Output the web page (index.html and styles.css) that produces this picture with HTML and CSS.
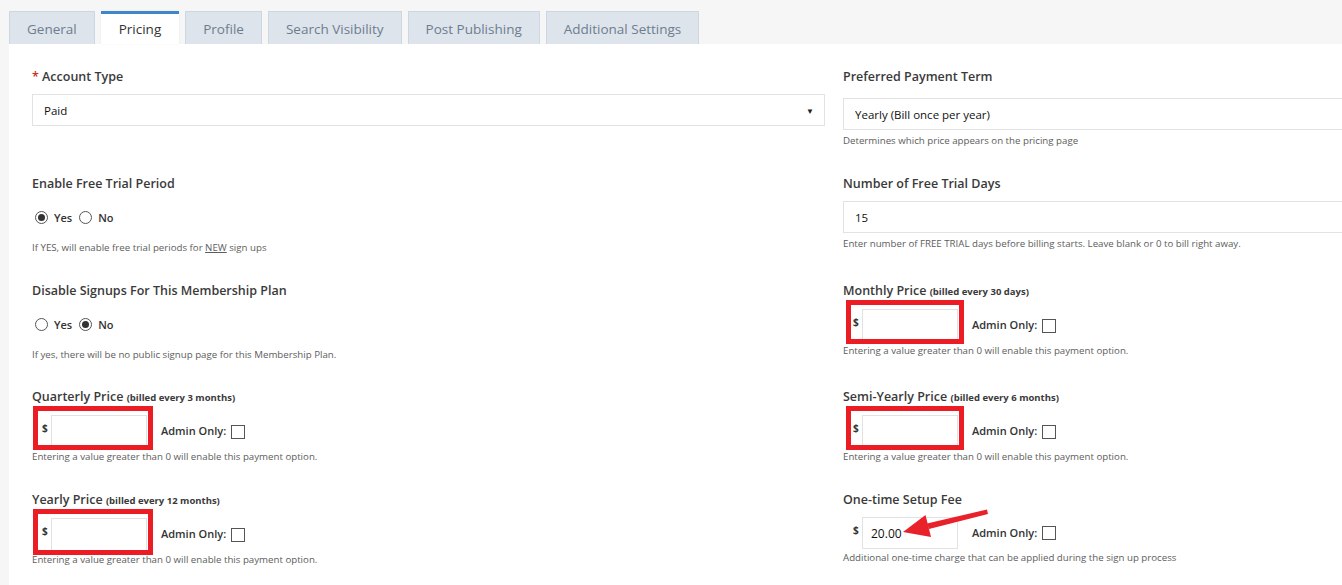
FILE: index.html
```html
<!DOCTYPE html>
<html lang="en">
<head>
<meta charset="utf-8">
<title>Membership Plan – Pricing</title>
<link rel="stylesheet" href="styles.css">
</head>
<body>
<div class="page">
  <nav class="tabs">
    <a class="tab">General</a>
    <a class="tab tab--active">Pricing</a>
    <a class="tab">Profile</a>
    <a class="tab">Search Visibility</a>
    <a class="tab">Post Publishing</a>
    <a class="tab">Additional Settings</a>
  </nav>

  <div class="panel">
    <div class="form-grid">

      <div class="field">
        <label class="field-label"><span class="req">*</span> Account Type</label>
        <div class="select"><span>Paid</span><span class="select-arrow">&#9660;</span></div>
      </div>

      <div class="field">
        <label class="field-label field-label--loose">Preferred Payment Term</label>
        <input class="text-input" type="text" value="Yearly (Bill once per year)">
        <p class="help">Determines which price appears on the pricing page</p>
      </div>

      <div class="field">
        <label class="field-label">Enable Free Trial Period</label>
        <div class="radios">
          <label class="radio"><input type="radio" name="trial" checked> Yes</label>
          <label class="radio"><input type="radio" name="trial"> No</label>
        </div>
        <p class="help help--radio">If YES, will enable free trial periods for <u>NEW</u> sign ups</p>
      </div>

      <div class="field">
        <label class="field-label">Number of Free Trial Days</label>
        <input class="text-input" type="text" value="15">
        <p class="help">Enter number of FREE TRIAL days before billing starts. Leave blank or 0 to bill right away.</p>
      </div>

      <div class="field">
        <label class="field-label">Disable Signups For This Membership Plan</label>
        <div class="radios">
          <label class="radio"><input type="radio" name="disable"> Yes</label>
          <label class="radio"><input type="radio" name="disable" checked> No</label>
        </div>
        <p class="help help--radio">If yes, there will be no public signup page for this Membership Plan.</p>
      </div>

      <div class="field">
        <label class="field-label">Monthly Price <small>(billed every 30 days)</small></label>
        <div class="price-row">
          <div class="money money--flagged"><span class="currency">$</span><input class="money-input" type="text" value=""></div>
          <label class="admin">Admin Only: <input type="checkbox"></label>
        </div>
        <p class="help help--price">Entering a value greater than 0 will enable this payment option.</p>
      </div>

      <div class="field">
        <label class="field-label">Quarterly Price <small>(billed every 3 months)</small></label>
        <div class="price-row">
          <div class="money money--flagged money--left"><span class="currency">$</span><input class="money-input" type="text" value=""></div>
          <label class="admin">Admin Only: <input type="checkbox"></label>
        </div>
        <p class="help help--price">Entering a value greater than 0 will enable this payment option.</p>
      </div>

      <div class="field">
        <label class="field-label">Semi-Yearly Price <small>(billed every 6 months)</small></label>
        <div class="price-row">
          <div class="money money--flagged"><span class="currency">$</span><input class="money-input" type="text" value=""></div>
          <label class="admin">Admin Only: <input type="checkbox"></label>
        </div>
        <p class="help help--price">Entering a value greater than 0 will enable this payment option.</p>
      </div>

      <div class="field">
        <label class="field-label">Yearly Price <small>(billed every 12 months)</small></label>
        <div class="price-row">
          <div class="money money--flagged money--left money--tall"><span class="currency">$</span><input class="money-input" type="text" value=""></div>
          <label class="admin">Admin Only: <input type="checkbox"></label>
        </div>
        <p class="help help--price">Entering a value greater than 0 will enable this payment option.</p>
      </div>

      <div class="field">
        <label class="field-label">One-time Setup Fee</label>
        <div class="price-row">
          <div class="money"><span class="currency">$</span><input class="money-input money-input--filled" type="text" value="20.00">
            <svg class="arrow" width="100" height="40" viewBox="0 0 100 40" aria-hidden="true">
              <path d="M29 18.5 L89 4.5 L90 9 L31 24 Z" fill="#e8212b"/>
              <polygon points="5,27 27.5,10 33,32" fill="#e8212b"/>
            </svg>
          </div>
          <label class="admin">Admin Only: <input type="checkbox"></label>
        </div>
        <p class="help help--price">Additional one-time charge that can be applied during the sign up process</p>
      </div>

    </div>
  </div>
</div>
</body>
</html>
```

FILE: styles.css
```css
html, body {
  margin: 0;
  padding: 0;
}

body {
  background: #f6f6f6;
  font-family: "Open Sans", "Liberation Sans", sans-serif;
  color: #333;
  overflow: hidden;
  width: 1342px;
  height: 585px;
}

.page {
  padding: 11px 0 0 9px;
}

/* Tabs */
.tabs {
  display: flex;
  gap: 6px;
  height: 33px;
}

.tab {
  box-sizing: border-box;
  height: 33px;
  padding: 1px 17px 0 17px;
  display: flex;
  align-items: center;
  background: #dde4ec;
  border: 1px solid #cdd7e2;
  border-bottom: none;
  color: #6d7d8e;
  font-size: 13.5px;
  cursor: pointer;
}

.tab--active {
  background: #fff;
  border: none;
  border-top: 3px solid #3d86c7;
  color: #333;
  padding: 0 18px;
  box-shadow: 0 0 2px rgba(0,0,0,0.06);
}

/* Panel */
.panel {
  background: #fff;
  width: 1650px;
  height: 560px;
  box-sizing: border-box;
  padding: 24px 23px 0 23px;
}

.form-grid {
  display: grid;
  grid-template-columns: 793px 793px;
  column-gap: 18px;
  grid-template-rows: 107px 107px 106px 103px auto;
}

.field {
  display: flex;
  flex-direction: column;
  align-items: flex-start;
}

.field-label {
  display: block;
  font-size: 12.5px;
  font-weight: 600;
  line-height: 18px;
  color: #3a3a3a;
  margin-bottom: 8px;
  white-space: nowrap;
}

.field-label--loose {
  margin-bottom: 12px;
}

.field-label small {
  font-size: 9.5px;
  font-weight: 700;
  color: #3a3a3a;
}

.req {
  color: #c9302c;
}

/* Select */
.select {
  box-sizing: border-box;
  width: 793px;
  height: 32px;
  border: 1px solid #e2e2e2;
  background: #fff;
  display: flex;
  align-items: center;
  justify-content: space-between;
  padding: 0 10px 0 11px;
  font-size: 11.5px;
  color: #111;
}

.select-arrow {
  font-size: 8px;
  color: #222;
}

/* Text inputs */
.text-input {
  box-sizing: border-box;
  width: 793px;
  height: 32px;
  border: 1px solid #e2e2e2;
  padding: 0 11px;
  font-family: inherit;
  font-size: 11.5px;
  color: #111;
  background: #fff;
  outline: none;
  margin: 0;
}

.help {
  margin: 4px 0 0 0;
  font-size: 9.7px;
  line-height: 14px;
  color: #5d5d5d;
  white-space: nowrap;
}

.help--radio {
  margin-top: 16px;
}

.help--price {
  margin-top: 2px;
}

/* Radios */
.radios {
  display: flex;
  gap: 4px;
  margin-top: 8px;
  height: 16px;
  align-items: center;
}

.radio {
  display: flex;
  align-items: center;
  gap: 6px;
  font-size: 11px;
  font-weight: 600;
  color: #333;
}

.radio input {
  appearance: none;
  -webkit-appearance: none;
  margin: 0 0 0 3px;
  width: 13px;
  height: 13px;
  border: 1px solid #555;
  border-radius: 50%;
  background: #fff;
  box-sizing: border-box;
  display: grid;
  place-items: center;
}

.radio input:checked::before {
  content: "";
  width: 7px;
  height: 7px;
  border-radius: 50%;
  background: #333;
}

/* Price rows */
.price-row {
  display: flex;
  align-items: center;
}

.money {
  position: relative;
  display: flex;
  align-items: flex-start;
  padding-left: 10px;
  gap: 3px;
  width: 105px;
}

.money--flagged::after {
  content: "";
  position: absolute;
  top: -9px;
  left: 3px;
  width: 118px;
  height: 44px;
  border: 5px solid #ec1c24;
  box-sizing: border-box;
  pointer-events: none;
}

.money--left::after {
  left: 1px;
  width: 120px;
}

.money--tall::after {
  height: 46px;
}

.currency {
  font-size: 10px;
  font-weight: 700;
  color: #333;
  width: 6px;
  margin-top: 6px;
}

.money-input {
  box-sizing: border-box;
  width: 96px;
  height: 33px;
  border: 1px solid #e2e2e2;
  margin: 0;
  padding: 0 8px;
  font-family: inherit;
  font-size: 12px;
  color: #111;
  outline: none;
  background: #fff;
}

.money-input--filled {
  height: 32px;
}

.arrow {
  position: absolute;
  left: 55px;
  top: -12px;
  overflow: visible;
}

.admin {
  display: flex;
  align-items: center;
  gap: 5px;
  margin-left: 14px;
  margin-top: -2px;
  font-size: 11px;
  font-weight: 600;
  color: #333;
}

.admin input {
  appearance: none;
  -webkit-appearance: none;
  margin: 2px 0 0 0;
  width: 14px;
  height: 14px;
  border: 1px solid #555;
  background: #fff;
  box-sizing: border-box;
}
```
